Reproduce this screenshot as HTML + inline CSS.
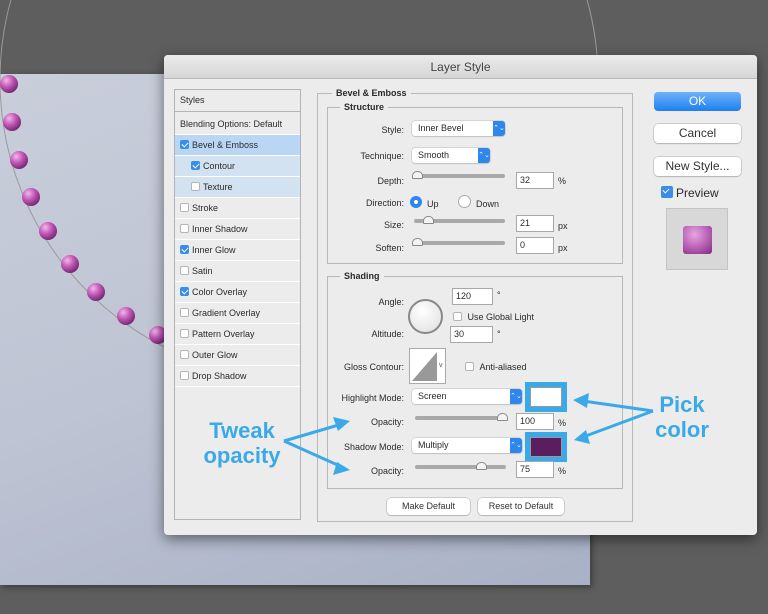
<!DOCTYPE html>
<html><head><meta charset="utf-8"><style>
*{box-sizing:border-box;margin:0;padding:0}
body{width:768px;height:614px;overflow:hidden;background:#5e5e5e;position:relative;font-family:"Liberation Sans",sans-serif;font-size:9px;color:#2a2a2a}
.a{position:absolute}
.canvas{left:0;top:74px;width:590px;height:511px;background:linear-gradient(160deg,#c9cedb 0%,#bec4d3 50%,#a9b1c6 100%);box-shadow:2px 2px 6px rgba(0,0,0,.4)}
.dlg{left:164px;top:55px;width:593px;height:480px;background:#ececec;border-radius:4px;box-shadow:0 4px 14px rgba(0,0,0,.5)}
.title{left:0;top:0;width:100%;height:24px;background:linear-gradient(#ebebeb,#d6d6d6);border-bottom:1px solid #b8b8b8;border-radius:4px 4px 0 0;text-align:center;line-height:24px;font-size:12px;color:#444}
.list{left:10px;top:34px;width:127px;height:431px;border:1px solid #b3b3b3;background:#ececec}
.row{position:absolute;left:0;width:125px;height:21px;border-bottom:1px solid #fff;line-height:20px;padding-left:5px;font-size:9px}
.cb{display:inline-block;width:9px;height:9px;border:1px solid #b5b5b5;background:#fff;border-radius:2px;vertical-align:-1px;margin-right:3px}
.cb.on{background:#3a8ee6;border-color:#3a8ee6;position:relative}
.cb.on:after{content:"";position:absolute;left:2px;top:0px;width:3px;height:5px;border:solid #fff;border-width:0 1.5px 1.5px 0;transform:rotate(45deg)}
.box{border:1px solid #b8b8b8}
.lg{position:absolute;background:#ececec;font-weight:bold;padding:0 4px;font-size:9px}
.lbl{position:absolute;text-align:right;width:90px;font-size:9px}
.sel{position:absolute;height:15px;background:#fff;border-radius:3px;box-shadow:0 0 0 .5px #bbb,0 1px 1px rgba(0,0,0,.15);padding-left:6px;line-height:15px;font-size:9px}
.sel i{position:absolute;right:0;top:0;width:12px;height:15px;background:#2f86ec;border-radius:0 3px 3px 0;color:#fff;font-style:normal;font-size:7px;text-align:center;line-height:15px}
.sl{position:absolute;height:4px;background:#a9a9a9;border-radius:2px}
.th{position:absolute;top:-3px;width:11px;height:8px;background:#f4f4f4;border:1px solid #888;border-radius:5px 5px 1px 1px}
.inp{position:absolute;height:17px;background:#fff;border:1px solid #a8a8a8;padding-left:3px;line-height:15px;font-size:9px}
.btn{position:absolute;background:#fff;border-radius:4px;box-shadow:0 0 0 .5px #aaa,0 1px 1px rgba(0,0,0,.2);text-align:center;font-size:9px;color:#333}
.ann{position:absolute;color:#3aa9e8;font-weight:bold;font-size:22px;text-align:center;line-height:25px}
</style></head><body>
<div class="a canvas"></div>
<svg class="a" style="left:0;top:0" width="768" height="614">
<circle cx="299" cy="80" r="299" fill="none" stroke="#9a9a9a" stroke-width="1"/>
<defs><radialGradient id="p" cx="35%" cy="30%" r="70%"><stop offset="0" stop-color="#f0b8ea"/><stop offset=".5" stop-color="#c45ab8"/><stop offset="1" stop-color="#7a2a78"/></radialGradient></defs>
<g fill="url(#p)">
<circle cx="9" cy="84" r="9"/><circle cx="12" cy="122" r="9"/><circle cx="19" cy="160" r="9"/><circle cx="31" cy="197" r="9"/><circle cx="48" cy="231" r="9"/><circle cx="70" cy="264" r="9"/><circle cx="96" cy="292" r="9"/><circle cx="126" cy="316" r="9"/><circle cx="158" cy="335" r="9"/>
</g></svg>
<div class="a dlg">
<div class="a title">Layer Style</div>
<div class="a list">
<div class="row" style="top:0;height:22px;border-bottom:1px solid #b3b3b3">Styles</div>
<div class="row" style="top:24px">Blending Options: Default</div>
<div class="row" style="top:45px;background:#b9d7f5"><span class="cb on"></span>Bevel &amp; Emboss</div>
<div class="row" style="top:66px;background:#d3e2f0;padding-left:16px"><span class="cb on"></span>Contour</div>
<div class="row" style="top:87px;background:#d3e2f0;padding-left:16px"><span class="cb"></span>Texture</div>
<div class="row" style="top:108px"><span class="cb"></span>Stroke</div>
<div class="row" style="top:129px"><span class="cb"></span>Inner Shadow</div>
<div class="row" style="top:150px"><span class="cb on"></span>Inner Glow</div>
<div class="row" style="top:171px"><span class="cb"></span>Satin</div>
<div class="row" style="top:192px"><span class="cb on"></span>Color Overlay</div>
<div class="row" style="top:213px"><span class="cb"></span>Gradient Overlay</div>
<div class="row" style="top:234px"><span class="cb"></span>Pattern Overlay</div>
<div class="row" style="top:255px"><span class="cb"></span>Outer Glow</div>
<div class="row" style="top:276px"><span class="cb"></span>Drop Shadow</div>
</div>
<div class="a box" style="left:153px;top:38px;width:316px;height:429px"></div>
<div class="lg" style="left:168px;top:33px">Bevel &amp; Emboss</div>
<div class="a box" style="left:163px;top:52px;width:296px;height:157px"></div>
<div class="lg" style="left:176px;top:47px">Structure</div>
<div class="lbl" style="left:150px;top:70px">Style:</div><div class="sel" style="left:248px;top:66px;width:93px">Inner Bevel<i>⌃⌄</i></div>
<div class="lbl" style="left:150px;top:96px">Technique:</div><div class="sel" style="left:248px;top:93px;width:78px">Smooth<i>⌃⌄</i></div>
<div class="lbl" style="left:150px;top:121px">Depth:</div><div class="sl" style="left:250px;top:119px;width:91px"><div class="th" style="left:-2px"></div></div><div class="inp" style="left:352px;top:117px;width:38px">32</div><div class="a" style="left:394px;top:121px">%</div>
<div class="lbl" style="left:150px;top:143px">Direction:</div>
<div class="a" style="left:246px;top:141px;width:12px;height:12px;border-radius:6px;background:#2f86ec"><div class="a" style="left:4px;top:4px;width:4px;height:4px;border-radius:2px;background:#fff"></div></div><div class="a" style="left:263px;top:144px">Up</div>
<div class="a" style="left:294px;top:140px;width:13px;height:13px;border-radius:7px;background:#fff;border:1px solid #aaa"></div><div class="a" style="left:312px;top:144px">Down</div>
<div class="lbl" style="left:150px;top:165px">Size:</div><div class="sl" style="left:250px;top:164px;width:91px"><div class="th" style="left:9px"></div></div><div class="inp" style="left:352px;top:160px;width:38px">21</div><div class="a" style="left:394px;top:166px">px</div>
<div class="lbl" style="left:150px;top:188px">Soften:</div><div class="sl" style="left:250px;top:186px;width:91px"><div class="th" style="left:-2px"></div></div><div class="inp" style="left:352px;top:182px;width:38px">0</div><div class="a" style="left:394px;top:188px">px</div>
<div class="a box" style="left:163px;top:221px;width:296px;height:213px"></div>
<div class="lg" style="left:176px;top:216px">Shading</div>
<div class="lbl" style="left:150px;top:242px">Angle:</div>
<div class="a" style="left:244px;top:244px;width:35px;height:35px;border-radius:50%;border:2px solid #888;background:radial-gradient(circle at 40% 35%,#fff,#ddd)"></div>
<div class="inp" style="left:288px;top:233px;width:41px">120</div><div class="a" style="left:333px;top:235px">°</div>
<div class="a" style="left:289px;top:257px"><span class="cb"></span>&nbsp;Use Global Light</div>
<div class="lbl" style="left:150px;top:274px">Altitude:</div><div class="inp" style="left:286px;top:271px;width:43px">30</div><div class="a" style="left:333px;top:274px">°</div>
<div class="lbl" style="left:150px;top:307px">Gloss Contour:</div>
<div class="a" style="left:245px;top:293px;width:37px;height:36px;background:#fff;border:1px solid #aaa"><svg width="35" height="34" style="position:absolute;left:0;top:0"><polygon points="2,32 27,3 27,32" fill="#999"/><text x="29" y="18" font-size="7" fill="#555" font-family="Liberation Sans">v</text></svg></div>
<div class="a" style="left:301px;top:307px"><span class="cb"></span>&nbsp;Anti-aliased</div>
<div class="lbl" style="left:150px;top:338px">Highlight Mode:</div><div class="sel" style="left:248px;top:334px;width:110px">Screen<i>⌃⌄</i></div>
<div class="a" style="left:361px;top:327px;width:42px;height:30px;background:#3aa9e8"><div class="a" style="left:5px;top:5px;width:32px;height:20px;background:#fff;border:1px solid #999"></div></div>
<div class="lbl" style="left:150px;top:362px">Opacity:</div><div class="sl" style="left:251px;top:361px;width:91px"><div class="th" style="left:82px"></div></div><div class="inp" style="left:352px;top:358px;width:38px">100</div><div class="a" style="left:394px;top:363px">%</div>
<div class="lbl" style="left:150px;top:387px">Shadow Mode:</div><div class="sel" style="left:248px;top:383px;width:110px">Multiply<i>⌃⌄</i></div>
<div class="a" style="left:361px;top:377px;width:42px;height:30px;background:#3aa9e8"><div class="a" style="left:5px;top:5px;width:32px;height:20px;background:#5a1e5e;border:1px solid #999"></div></div>
<div class="lbl" style="left:150px;top:411px">Opacity:</div><div class="sl" style="left:251px;top:410px;width:91px"><div class="th" style="left:61px"></div></div><div class="inp" style="left:352px;top:406px;width:38px">75</div><div class="a" style="left:394px;top:411px">%</div>
<div class="btn" style="left:223px;top:443px;width:83px;height:17px;line-height:17px">Make Default</div>
<div class="btn" style="left:314px;top:443px;width:86px;height:17px;line-height:17px">Reset to Default</div>
<div class="btn" style="left:490px;top:37px;width:87px;height:19px;line-height:19px;background:linear-gradient(#6cb3fb,#1f7ff0);color:#fff;font-size:12px;box-shadow:none">OK</div>
<div class="btn" style="left:490px;top:69px;width:87px;height:19px;line-height:19px;font-size:12px">Cancel</div>
<div class="btn" style="left:490px;top:102px;width:87px;height:19px;line-height:19px;font-size:12px">New Style...</div>
<div class="a" style="left:497px;top:131px;font-size:12px"><span class="cb on" style="width:12px;height:12px"></span>Preview</div>
<div class="a" style="left:502px;top:153px;width:62px;height:62px;background:#d8d8d8;border:1px solid #c4c4c4"><div class="a" style="left:16px;top:17px;width:29px;height:28px;border-radius:3px;background:radial-gradient(circle at 40% 30%,#e8a4e0,#b057ae 60%,#7b2c7b)"></div></div>
</div>
<div class="ann" style="left:196px;top:418px;width:92px">Tweak<br>opacity</div>
<div class="ann" style="left:640px;top:392px;width:84px">Pick<br>color</div>
<svg class="a" style="left:0;top:0" width="768" height="614" fill="#3aa9e8" stroke="#3aa9e8">
<g stroke-width="3" fill="none"><path d="M284 441 L342 424"/><path d="M284 441 L342 467"/><path d="M653 411 L583 401"/><path d="M653 411 L583 437"/></g>
<polygon points="350,421 333,417 338,431" stroke="none"/><polygon points="350,470 337,462 333,475" stroke="none"/>
<polygon points="573,400 589,393 587,408" stroke="none"/><polygon points="574,440 586,430 590,444" stroke="none"/>
</svg>
</body></html>
